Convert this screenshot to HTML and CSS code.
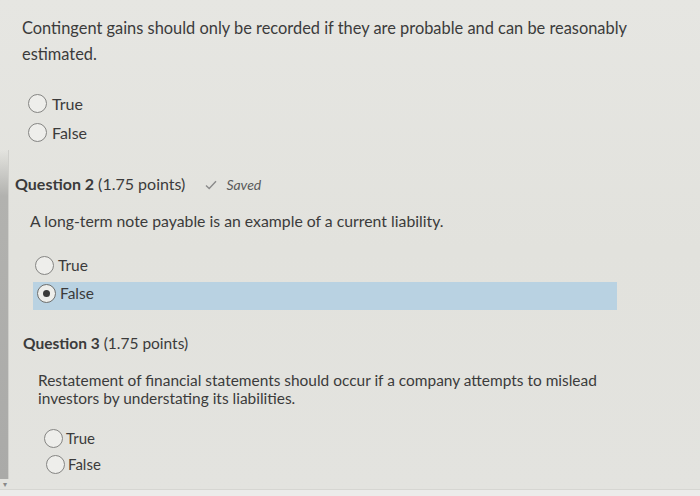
FILE: index.html
```html
<!DOCTYPE html>
<html>
<head>
<meta charset="utf-8">
<link rel="stylesheet" href="styles.css">
</head>
<body>
<div class="screen">
  <div class="rail">
    <div class="rail-bar"></div>
    <div class="rail-arrow">▾</div>
  </div>
  <div class="main">
    <section class="q q1">
      <p class="q-text">Contingent gains should only be recorded if they are probable and can be reasonably estimated.</p>
      <ul class="opts">
        <li class="opt"><span class="radio"></span><span class="lbl">True</span></li>
        <li class="opt"><span class="radio"></span><span class="lbl">False</span></li>
      </ul>
    </section>

    <section class="q q2">
      <h2 class="q-head"><b>Question 2</b> (1.75 points) <span class="saved"><svg class="check" viewBox="0 0 12 10" width="12" height="10"><path d="M1 5.5 L4.2 8.5 L11 1.2" fill="none" stroke="#8a8a8a" stroke-width="1.4"/></svg>Saved</span></h2>
      <p class="q-text">A long-term note payable is an example of a current liability.</p>
      <ul class="opts">
        <li class="opt first"><span class="radio"></span><span class="lbl">True</span></li>
        <li class="opt sel"><span class="radio on"></span><span class="lbl">False</span></li>
      </ul>
    </section>

    <section class="q q3">
      <h2 class="q-head"><b>Question 3</b> (1.75 points)</h2>
      <p class="q-text">Restatement of financial statements should occur if a company attempts to mislead investors by understating its liabilities.</p>
      <ul class="opts">
        <li class="opt"><span class="radio"></span><span class="lbl">True</span></li>
        <li class="opt o2"><span class="radio"></span><span class="lbl">False</span></li>
      </ul>
    </section>
  </div>
</div>
<div class="bottom"></div>
</body>
</html>
```

FILE: styles.css
```css
html, body {
  margin: 0;
  padding: 0;
}
body {
  width: 700px;
  height: 496px;
  overflow: hidden;
  background: linear-gradient(180deg, #e6e6e2 0%, #e2e2dd 50%, #e3e3df 100%);
  font-family: Lato, "Open Sans", sans-serif;
  color: #3b3b3b;
}
.screen {
  display: flex;
  height: 489px;
}
.rail {
  width: 9px;
  display: flex;
  flex-direction: column;
}
.rail-bar {
  flex: 1;
  margin-top: 150px;
  background: linear-gradient(180deg, rgba(170,170,168,0) 0%, #b2b2af 14%, #aaaaa8 100%);
  border-right: 1px solid #cfcfcb;
}
.rail-arrow {
  height: 10px;
  font-size: 8px;
  line-height: 10px;
  color: #888;
  text-align: center;
}
.main {
  flex: 1;
}
.q p, .q h2, .q ul {
  margin: 0;
  padding: 0;
}
.opts {
  list-style: none;
}
.opt {
  display: flex;
  align-items: center;
}
.radio {
  box-sizing: border-box;
  width: 19px;
  height: 19px;
  border-radius: 50%;
  border: 1.3px solid #858583;
  background: #eeeeeb;
  flex: none;
  display: flex;
  align-items: center;
  justify-content: center;
}
.radio.on {
  border-color: #6e6e6c;
}
.radio.on::after {
  content: "";
  width: 7px;
  height: 7px;
  border-radius: 50%;
  background: #3a3a3a;
}
.lbl {
  margin-left: 5px;
}
.q-head {
  font-weight: normal;
  display: flex;
  align-items: baseline;
}
.q-head b {
  font-weight: bold;
  margin-right: 4px;
}
.saved {
  font-style: italic;
  font-size: 14px;
  color: #5a5a5a;
  margin-left: 20px;
}
.check {
  margin-right: 9px;
}

/* Question 1 */
.q1 {
  padding: 15px 0 0 13px;
}
.q1 .q-text {
  font-size: 16.4px;
  line-height: 26px;
  width: 640px;
}
.q1 .opts {
  margin-top: 22px;
  padding-left: 6px;
  font-size: 16px;
}
.q1 .opt {
  height: 29px;
}

/* Question 2 */
.q2 {
  padding: 26px 0 0 6px;
}
.q2 .q-head {
  font-size: 16px;
  line-height: 22px;
}
.q2 .q-text {
  margin-top: 14px;
  margin-left: 15px;
  font-size: 15.8px;
  line-height: 22px;
}
.q2 .opts {
  margin-top: 16px;
  margin-left: 18px;
  font-size: 15.5px;
}
.q2 .lbl {
  margin-left: 4px;
}
.q2 .opt {
  height: 28px;
  padding-left: 2px;
}
.q2 .opt.first {
  height: 34px;
}
.q2 .opt.sel {
  width: 584px;
  height: 28px;
  padding-left: 4px;
  background: #b9d2e2;
  align-items: flex-start;
  padding-top: 2px;
  box-sizing: border-box;
}

/* Question 3 */
.q3 {
  padding: 22px 0 0 14px;
}
.q3 .q-head {
  font-size: 15.5px;
  line-height: 22px;
}
.q3 .q-text {
  margin-top: 17px;
  margin-left: 15px;
  font-size: 15.45px;
  line-height: 18px;
  width: 600px;
}
.q3 .opts {
  margin-top: 18px;
  margin-left: 21px;
  font-size: 15px;
}
.q3 .lbl {
  margin-left: 3px;
}
.q3 .opt {
  height: 26px;
}
.q3 .opt.o2 {
  padding-left: 2px;
}

.bottom {
  height: 7px;
  background: #ececea;
  border-top: 1px solid #d6d6d2;
}
```
